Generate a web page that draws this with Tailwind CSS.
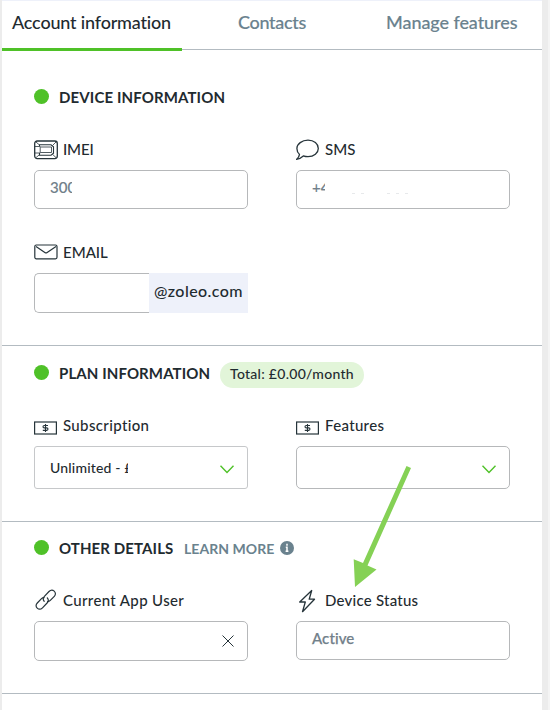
<!DOCTYPE html>
<html lang="en">
<head>
<meta charset="utf-8">
<title>Account information</title>
<script src="https://cdn.jsdelivr.net/npm/@tailwindcss/browser@4"></script>
</head>
<body class="bg-[#f4f4f4] font-['Lato',sans-serif] text-[#1f2b30]">
<div class="relative h-[710px] w-[548px] overflow-hidden bg-[#ececec] pl-[2px] pr-[6px]">
<main class="h-full border-t border-[#eef1fa] bg-white font-medium whitespace-nowrap">
  <nav class="flex h-[50px] text-[18px] leading-[43px] text-[#6a828e]">
    <a class="h-[50px] w-[180px] border-b-3 border-[#4fc128] pl-[10px] tracking-[-0.18px] text-[#1f2b30]">Account information</a>
    <a class="h-[49px] w-[180px] border-b border-[#b3bbc1] pl-[56px] tracking-[-0.3px] [-webkit-text-stroke:0.15px]">Contacts</a>
    <a class="h-[49px] w-[180px] border-b border-[#b3bbc1] pl-[24px] tracking-[-0.07px] [-webkit-text-stroke:0.15px]">Manage features</a>
  </nav>

  <section class="h-[295px] border-b border-[#b3bbc1] px-8 pt-[33px]">
    <div class="flex h-[26px] items-center">
      <i class="mb-[2px] size-[15px] rounded-full bg-[#4fc128]"></i>
      <h2 class="ml-[10px] text-[15px] font-bold tracking-[0.12px]">DEVICE INFORMATION</h2>
    </div>
    <div class="mt-[25px] grid grid-cols-[214px_214px] gap-x-12">
      <div>
        <div class="flex h-[28px] items-center">
          <svg class="mt-[2px] w-[24px]" height="20" viewBox="0 0 24 20" fill="none" stroke="#26343a"><rect x=".7" y="1" width="22.6" height="17.6" rx="2.5" stroke-width="1.3"/><path d="M5.500 6V4.700H17l2.500 2v6.500l-2.500 2H5.500V13" stroke-width="1.100"/><path d="M.7 6.500h5.500v6.500H.7M6.500 7h11v5.500h-11M2 2l3.500 3M22 2l-3.500 3.500M2 17.600l3.500-3M22 17.600l-3.500-3.300" stroke-width=".8"/></svg>
          <label class="ml-[5px] text-[15px] tracking-[-0.15px]">IMEI</label>
        </div>
        <div class="mt-[7px] flex h-[39px] rounded-[5px] border border-[#b6b8ba] pl-[15px] text-[15px] leading-[33px] text-[#71808a] [-webkit-text-stroke:0.15px]"><span class="w-[22px] overflow-hidden">300</span></div>
      </div>
      <div>
        <div class="flex h-[28px] items-center">
          <svg class="mt-[2px]" width="24" height="22" viewBox="0 0 24 22" fill="none" stroke="#26343a" stroke-width="1.3" stroke-linejoin="round"><path d="M12 1.200C18 1.200 22.300 4.900 22.300 9.400S18 17.700 12 17.700c-1.700 0-3.300-.3-4.700-.8C5.300 18.700 3 20.300.5 20.400c1.700-1.400 2.800-3.200 3-5C1.800 13.800.9 11.700.9 9.400.9 4.900 6 1.200 12 1.200z"/></svg>
          <label class="ml-[5px] text-[15px]">SMS</label>
        </div>
        <div class="mt-[7px] flex h-[39px] rounded-[5px] border border-[#b6b8ba] pl-[15px] text-[15px] leading-[33px] text-[#71808a] [-webkit-text-stroke:0.15px]"><span class="w-[13px] overflow-hidden">+4</span><svg width="90" height="37" stroke="#e7e9eb"><path d="M27 22.500h3M36 22.500h3M62 22.500h3M71 22.500h3M80 22.500h3"/></svg></div>
      </div>
      <div class="mt-[29px]">
        <div class="flex h-[28px] items-center">
          <svg width="24" height="16" viewBox="0 0 24 16" fill="none" stroke="#26343a" stroke-width="1.200" stroke-linejoin="round"><rect x=".8" y="1" width="22.200" height="13.800" rx="1.500"/><path d="M2 2.500l9.200 6.200q.8.500 1.600 0L22 2.500"/></svg>
          <label class="ml-[5px] text-[15px]">EMAIL</label>
        </div>
        <div class="mt-[7px] flex h-[40px]">
          <div class="w-[115px] rounded-l-[5px] border border-r-0 border-[#b6b8ba]"></div>
          <div class="w-[99px] bg-[#eef1fa] pl-[5px] text-[16px] leading-[35px] tracking-[0.42px]">@zoleo.com</div>
        </div>
      </div>
    </div>
  </section>

  <section class="h-[176px] border-b border-[#b3bbc1] px-8 pt-[14px]">
    <div class="flex h-[26px] items-center">
      <i class="mb-[2px] size-[15px] rounded-full bg-[#4fc128]"></i>
      <h2 class="ml-[10px] w-[161px] text-[15px] font-bold tracking-[0.1px]">PLAN INFORMATION</h2>
      <span class="mt-[4px] h-[26px] w-[144px] rounded-full bg-[#e2f5d9] pl-[10px] text-[14px] leading-[24px] tracking-[0.28px]">Total: £0.00/month</span>
    </div>
    <div class="mt-[25px] grid grid-cols-[214px_214px] gap-x-12">
      <div>
        <div class="flex h-[28px] items-center">
          <svg class="mt-[5px]" width="24" height="14" viewBox="0 0 24 14" fill="none" stroke="#26343a"><rect x=".6" y="1" width="21.800" height="12" stroke-width="1.200"/><path d="M14 4.500h-3.700q-1.300 0-1.300 1.200t1.300 1.200h2.400q1.300 0 1.300 1.200t-1.300 1.300H8.800M11.500 3v8" stroke-width="1.100"/></svg>
          <label class="ml-[5px] text-[15px] tracking-[0.36px]">Subscription</label>
        </div>
        <div class="mt-[7px] flex h-[43px] items-center rounded-[3px] border border-[#c6c8ca] pr-[13px] pl-[15px] text-[14px]"><span class="mb-px w-[78px] overflow-hidden tracking-[0.18px]">Unlimited - £</span>
          <svg class="mt-[4px] ml-auto" width="14" height="9" fill="none" stroke="#4fc128" stroke-width="1.400"><path d="M.5.7L7 7.500 13.500.7"/></svg></div>
      </div>
      <div>
        <div class="flex h-[28px] items-center">
          <svg class="mt-[5px]" width="24" height="14" viewBox="0 0 24 14" fill="none" stroke="#26343a"><rect x=".6" y="1" width="21.800" height="12" stroke-width="1.200"/><path d="M14 4.500h-3.700q-1.300 0-1.300 1.200t1.300 1.200h2.400q1.300 0 1.300 1.200t-1.300 1.300H8.800M11.500 3v8" stroke-width="1.100"/></svg>
          <label class="ml-[5px] text-[15px] tracking-[0.33px]">Features</label>
        </div>
        <div class="mt-[7px] flex h-[43px] items-center rounded-[5px] border border-[#b6b8ba] pr-[13px]">
          <svg class="mt-[4px] ml-auto" width="14" height="9" fill="none" stroke="#4fc128" stroke-width="1.400"><path d="M.5.7L7 7.500 13.500.7"/></svg></div>
      </div>
    </div>
  </section>

  <section class="h-[172px] border-b border-[#b3bbc1] px-8 pt-[13px]">
    <div class="flex h-[26px] items-center">
      <i class="mb-[2px] size-[15px] rounded-full bg-[#4fc128]"></i>
      <h2 class="ml-[10px] w-[125px] text-[15px] font-bold tracking-[0.1px]">OTHER DETAILS</h2>
      <a class="w-[95.500px] text-[14px] font-bold tracking-[0.05px] text-[#6a828e]">LEARN MORE</a>
      <svg class="mb-px" width="14" height="14" viewBox="0 0 14 14"><circle cx="7" cy="7" r="7" fill="#6a828e"/><path d="M7 2.800v1.900M5.800 6.200H7v4M5.600 10.300h2.800" fill="none" stroke="white" stroke-width="1.500"/></svg>
    </div>
    <div class="mt-[25px] grid grid-cols-[214px_214px] gap-x-12">
      <div>
        <div class="flex h-[28px] items-center">
          <svg width="24" height="22" viewBox="0 0 24 22" fill="none" stroke="#26343a" stroke-width="1.200" stroke-linecap="round"><path d="M10.200 12.300c-1.500-1.900-1.200-3.600.2-5L15 2.500c1.600-1.600 3.700-1.700 5.200-.4 1.600 1.500 1.600 3.600.1 5.200l-4 4.100c-.8.8-1.700 1.200-2.800 1.100"/><path d="M13.300 8.900c1.500 1.900 1.200 3.700-.2 5.100l-4.600 4.800c-1.600 1.600-3.800 1.700-5.300.3s-1.500-3.500.1-5.100l4.200-4.300c.8-.8 1.600-1.100 2.600-1"/></svg>
          <label class="ml-[5px] text-[15px] tracking-[0.36px]">Current App User</label>
        </div>
        <div class="mt-[7px] flex h-[40px] items-center rounded-[5px] border border-[#b6b8ba] pr-[13px]">
          <svg class="ml-auto" width="12" height="12" stroke="#26343a"><path d="M.5.5l11 11M11.500.5l-11 11"/></svg></div>
      </div>
      <div>
        <div class="flex h-[28px] items-center">
          <svg class="mt-[2px]" width="24" height="24" viewBox="0 0 24 24" fill="none" stroke="#26343a" stroke-width="1.300" stroke-linejoin="round"><path d="M15.700 1.500L3.700 13h5.600L6.500 22.700 18.500 10.200h-5.300z"/></svg>
          <label class="ml-[5px] text-[15px] tracking-[0.24px]">Device Status</label>
        </div>
        <div class="mt-[7px] h-[39px] rounded-[5px] border border-[#b6b8ba] pl-[15px] text-[15px] leading-[33px] tracking-[0.1px] text-[#71808a] [-webkit-text-stroke:0.25px]">Active</div>
      </div>
    </div>
  </section>
</main>
<svg class="absolute top-0 left-0" width="548" height="710"><path d="M406.500 466L363 563 353.700 559.200 355 587 376.500 569.500 367.500 565.500 411 468z" fill="#85d155"/></svg>
</div>
</body>
</html>
